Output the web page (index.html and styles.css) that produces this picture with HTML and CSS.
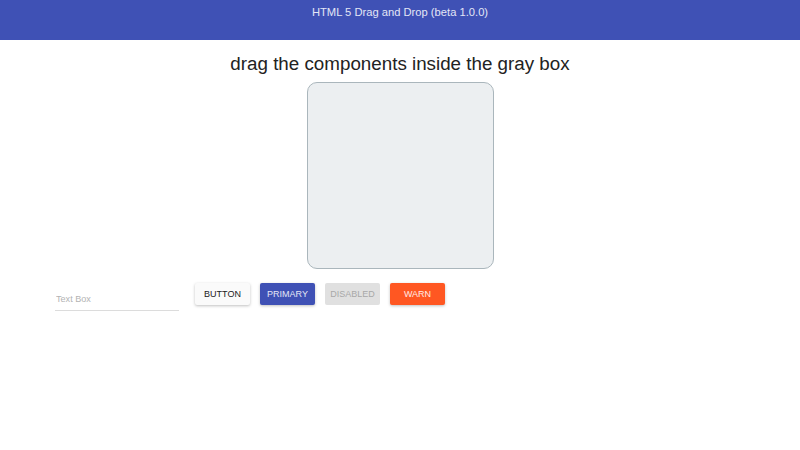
FILE: index.html
```html
<!DOCTYPE html>
<html>
<head>
<meta charset="utf-8">
<link rel="stylesheet" href="styles.css">
</head>
<body>
<header class="topbar">HTML 5 Drag and Drop (beta 1.0.0)</header>
<main class="main">
  <h1 class="heading">drag the components inside the gray box</h1>
  <div class="dropzone"></div>
  <div class="palette">
    <label class="field"><input class="field-input" type="text" placeholder="Text Box"></label>
    <button class="btn btn-basic">BUTTON</button>
    <button class="btn btn-primary">PRIMARY</button>
    <button class="btn btn-disabled" disabled>DISABLED</button>
    <button class="btn btn-warn">WARN</button>
  </div>
</main>
</body>
</html>
```
FILE: styles.css
```css
html, body {
  margin: 0;
  padding: 0;
  background: #ffffff;
  font-family: "Liberation Sans", Arial, sans-serif;
}
.topbar {
  height: 40px;
  box-sizing: border-box;
  padding-top: 5px;
  background: #3f51b5;
  color: #e3e6f5;
  font-size: 11.2px;
  line-height: 14px;
  text-align: center;
}
.main {
  display: flex;
  flex-direction: column;
  align-items: center;
}
.heading {
  margin: 12px 0 0;
  font-size: 18.8px;
  line-height: 23px;
  font-weight: normal;
  color: #222222;
}
.dropzone {
  margin-top: 7px;
  width: 187px;
  height: 187px;
  box-sizing: border-box;
  background: #eceff1;
  border: 1px solid #aab6bc;
  border-radius: 10px;
}
.palette {
  align-self: flex-start;
  display: flex;
  align-items: flex-start;
  margin-top: 14px;
  padding-left: 55px;
  gap: 10px;
}
.field {
  display: block;
  width: 124px;
  margin-right: 6px;
  padding-top: 10px;
}
.field-input {
  display: block;
  width: 100%;
  box-sizing: border-box;
  border: none;
  border-bottom: 1px solid #dcdcdc;
  outline: none;
  padding: 0 0 5px 1px;
  font-family: "Liberation Sans", Arial, sans-serif;
  font-size: 9.1px;
  line-height: 12px;
  color: #333;
  background: transparent;
}
.field-input::placeholder {
  color: #b3b3b3;
}
.btn {
  width: 55px;
  height: 22px;
  padding: 0;
  border: none;
  border-radius: 2px;
  font-family: "Liberation Sans", Arial, sans-serif;
  font-size: 9px;
  font-weight: 400;
  cursor: pointer;
}
.btn-basic {
  background: #fafafa;
  color: #212121;
  box-shadow: 0 1px 3px rgba(0,0,0,0.25);
}
.btn-primary {
  background: #3f51b5;
  color: #e3e6f5;
  box-shadow: 0 1px 3px rgba(0,0,0,0.25);
}
.btn-disabled {
  background: #e0e0e0;
  color: #a8a8a8;
}
.btn-warn {
  background: #ff5722;
  color: #ffece6;
  box-shadow: 0 1px 3px rgba(0,0,0,0.25);
}
```
